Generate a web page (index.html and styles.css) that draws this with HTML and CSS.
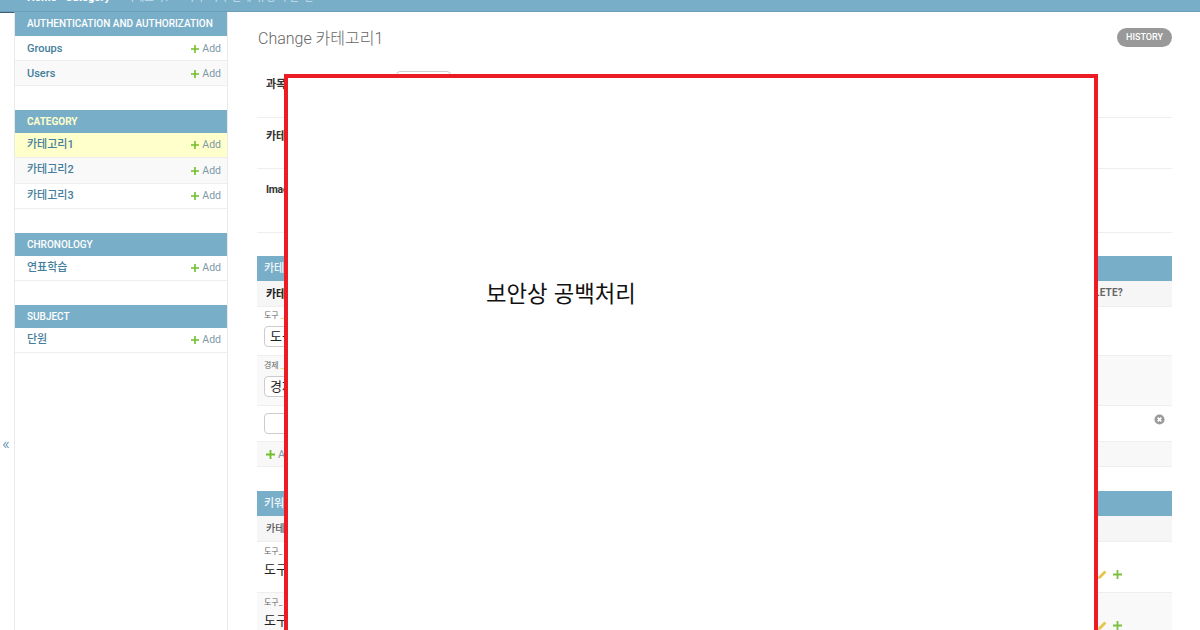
FILE: index.html
```html
<!DOCTYPE html>
<html lang="ko">
<head>
<meta charset="utf-8">
<title>Change 카테고리1</title>
<link rel="stylesheet" href="styles.css">
</head>
<body>
<div class="breadcrumbs"><div class="crumbs"><b>Home</b> › <b>Category</b> <span class="sep">›</span> <span class="ko">카테고리1</span> <span class="sep">›</span> <span class="ko">기타 기타 문제 유형 구분 선</span></div></div>
<div class="shell">
  <div class="toggle"><span>«</span></div>
  <nav class="sidebar">
    <section class="module first">
      <h2 class="caption">AUTHENTICATION AND AUTHORIZATION</h2>
      <div class="mrow"><a class="mname">Groups</a><span class="madd"><svg class="plus" viewBox="0 0 10 10"><path d="M4 0h2v4h4v2H6v4H4V6H0V4h4z"/></svg>Add</span></div>
      <div class="mrow alt"><a class="mname">Users</a><span class="madd"><svg class="plus" viewBox="0 0 10 10"><path d="M4 0h2v4h4v2H6v4H4V6H0V4h4z"/></svg>Add</span></div>
    </section>
    <section class="module">
      <h2 class="caption current">CATEGORY</h2>
      <div class="mrow selected"><a class="mname kor">카테고리1</a><span class="madd"><svg class="plus" viewBox="0 0 10 10"><path d="M4 0h2v4h4v2H6v4H4V6H0V4h4z"/></svg>Add</span></div>
      <div class="mrow alt tall"><a class="mname kor">카테고리2</a><span class="madd"><svg class="plus" viewBox="0 0 10 10"><path d="M4 0h2v4h4v2H6v4H4V6H0V4h4z"/></svg>Add</span></div>
      <div class="mrow"><a class="mname kor">카테고리3</a><span class="madd"><svg class="plus" viewBox="0 0 10 10"><path d="M4 0h2v4h4v2H6v4H4V6H0V4h4z"/></svg>Add</span></div>
    </section>
    <section class="module">
      <h2 class="caption">CHRONOLOGY</h2>
      <div class="mrow"><a class="mname kor">연표학습</a><span class="madd"><svg class="plus" viewBox="0 0 10 10"><path d="M4 0h2v4h4v2H6v4H4V6H0V4h4z"/></svg>Add</span></div>
    </section>
    <section class="module">
      <h2 class="caption">SUBJECT</h2>
      <div class="mrow"><a class="mname kor">단원</a><span class="madd"><svg class="plus" viewBox="0 0 10 10"><path d="M4 0h2v4h4v2H6v4H4V6H0V4h4z"/></svg>Add</span></div>
    </section>
  </nav>
  <main class="content">
    <div class="titlebar">
      <h1 class="title">Change 카테고리1</h1>
      <a class="history">HISTORY</a>
    </div>
    <div class="frow f1"><label class="flabel">과목</label><span class="fselect"></span></div>
    <div class="frow f2"><label class="flabel">카테</label></div>
    <div class="frow f3"><label class="flabel latin">Image</label></div>

    <section class="inline one">
      <h2 class="ihead">카테고리</h2>
      <div class="ith"><span>카테고리</span><span class="del">DELETE?</span></div>
      <div class="irow r1"><small class="ilabel">도구 <i class="req">_</i></small><span class="iselect">도구</span></div>
      <div class="irow r2"><small class="ilabel">경제 <i class="req">_</i></small><span class="iselect">경제</span></div>
      <div class="irow r3"><span class="iselect"></span><svg class="remove" viewBox="0 0 12 12"><circle cx="6" cy="6" r="5.5"/><path d="M4 4l4 4M8 4l-4 4"/></svg></div>
      <div class="iadd"><svg class="plus" viewBox="0 0 10 10"><path d="M4 0h2v4h4v2H6v4H4V6H0V4h4z"/></svg>Add</div>
    </section>

    <section class="inline two">
      <h2 class="ihead">키워드</h2>
      <div class="ith plain"><span>카테고리</span></div>
      <div class="krow"><small class="ilabel">도구_</small><div class="kline"><span class="kval">도구</span><span class="kicons"><svg class="pencil" viewBox="0 0 12 12"><path d="M0 12l1-3.6L8.6.8l2.6 2.6L3.6 11z"/></svg><svg class="plus kplus" viewBox="0 0 10 10"><path d="M4 0h2v4h4v2H6v4H4V6H0V4h4z"/></svg></span></div></div>
      <div class="krow alt"><small class="ilabel">도구_</small><div class="kline"><span class="kval">도구</span><span class="kicons"><svg class="pencil" viewBox="0 0 12 12"><path d="M0 12l1-3.6L8.6.8l2.6 2.6L3.6 11z"/></svg><svg class="plus kplus" viewBox="0 0 10 10"><path d="M4 0h2v4h4v2H6v4H4V6H0V4h4z"/></svg></span></div></div>
    </section>
  </main>
</div>
<div class="redact"><p class="redact-text">보안상 공백처리</p></div>
</body>
</html>
```
FILE: styles.css
```css
* { box-sizing: border-box; }
html, body { margin: 0; height: 630px; overflow: hidden; background: #fff; }
body { font-family: Roboto, "Noto Sans CJK KR", sans-serif; font-size: 12px; color: #333; position: relative; }
h1, h2, p { margin: 0; font-weight: 400; }

.breadcrumbs { height: 12px; background: #79aec8; border-bottom: 1px solid #6c9ebb; overflow: hidden; padding-left: 27px; color: #c9e0ec; }
.crumbs { font-size: 11px; line-height: 16px; margin-top: -10px; white-space: nowrap; }
.crumbs b { color: #fff; font-weight: 700; }
.crumbs .ko { font-size: 10.5px; word-spacing: 2px; }
.crumbs .sep { margin: 0 3px; }

.shell { display: flex; height: 618px; }
.toggle { width: 15px; flex: none; border-right: 1px solid #eaeaea; border-top: 1px solid #3b5f78; display: flex; align-items: flex-start; padding: 420px 0 0 2px; color: #447e9b; font-size: 17px; font-weight: 300; line-height: 20px; }
.sidebar { width: 213px; flex: none; border-right: 1px solid #eaeaea; }
.module { margin-bottom: 24px; }
.caption { height: 23px; background: #79aec8; color: #fff; font-size: 10px; font-weight: 500; line-height: 23px; padding-left: 12px; white-space: nowrap; }
.caption.current { color: #ffffcc; font-weight: 700; }
.first .caption { height: 24px; line-height: 23px; }
.first .mrow { padding-top: 1px; }
.mrow { height: 25px; display: flex; justify-content: space-between; align-items: center; padding: 0 6px 0 12px; border-bottom: 1px solid #eee; }
.mrow.alt { background: #f9f9f9; }
.mrow.tall { height: 26px; }
.mrow.selected { background: #ffffcc; }
.mname { color: #447e9b; font-size: 11px; font-weight: 500; line-height: 14px; }
.mname.kor { margin-bottom: 1px; }
.madd { display: flex; align-items: center; color: #7d99a8; font-size: 10.5px; line-height: 14px; }
.plus { width: 8px; height: 8px; fill: #70bf2b; margin-right: 3px; flex: none; }

.content { flex: 1; padding: 0 28px 0 29px; min-width: 0; }
.titlebar { height: 54px; display: flex; justify-content: space-between; align-items: flex-start; padding-top: 17px; }
.title { font-size: 16px; line-height: 20px; font-weight: 300; color: #666; padding-left: 1px; }
.history { background: #999; color: #fff; font-size: 9px; font-weight: 500; height: 19px; line-height: 19px; width: 55px; margin-top: -1px; text-align: center; border-radius: 10px; }

.frow { display: flex; align-items: flex-start; padding-left: 9px; border-bottom: 1px solid #eee; }
.f1 { height: 52px; padding-top: 12px; }
.f2 { height: 51px; padding-top: 12px; }
.f3 { height: 64px; padding-top: 14px; }
.flabel { width: 130px; color: #333; font-size: 11px; font-weight: 700; line-height: 14px; }
.flabel.latin { font-size: 10.5px; letter-spacing: -.3px; }
.fselect { width: 55px; height: 20px; border: 1px solid #ccc; border-radius: 4px; margin-top: -7px; }

.inline { margin-top: 23px; }
.inline.two { margin-top: 24px; }
.ihead { height: 25px; background: #79aec8; color: #f0f7fb; font-size: 11px; font-weight: 500; line-height: 25px; padding-left: 7px; }
.ith { height: 26px; background: #f6f6f6; border-bottom: 1px solid #eee; padding: 0 49px 2px 9px; display: flex; justify-content: space-between; align-items: center; color: #222; font-size: 11px; font-weight: 700; }
.ith.plain { color: #555; font-size: 10px; font-weight: 500; }
.del { color: #666; font-size: 10px; letter-spacing: .2px; }
.irow { padding: 0 7px; border-bottom: 1px solid #eee; }
.r1 { height: 49px; padding-top: 3px; }
.r2 { height: 50px; padding-top: 4px; background: #f9f9f9; }
.r3 { height: 36px; padding-top: 7px; display: flex; justify-content: space-between; align-items: flex-start; }
.ilabel { display: block; color: #666; font-size: 8px; line-height: 12px; margin-bottom: 4px; }
.req { color: #efb80b; font-style: normal; }
.iselect { display: block; width: 120px; height: 21px; border: 1px solid #ccc; border-radius: 4px; background: #fff; color: #222; font-size: 13px; line-height: 19px; padding-left: 5px; }
.remove { width: 11px; height: 11px; fill: #999; margin-top: 1px; }
.remove path { stroke: #fff; stroke-width: 1.8; fill: none; }
.iadd { height: 25px; display: flex; align-items: center; padding-left: 9px; background: #f8f8f8; border-bottom: 1px solid #eee; color: #7d99a8; font-size: 11px; }
.iadd .plus { width: 9px; height: 9px; margin-right: 3px; }

.krow { height: 51px; padding: 4px 7px 0; border-bottom: 1px solid #eee; }
.krow.alt { background: #f9f9f9; }
.kline { display: flex; justify-content: space-between; align-items: flex-start; }
.kval { color: #222; font-size: 13px; line-height: 16px; }
.kicons { display: flex; align-items: center; padding: 8px 43px 0 0; }
.pencil { width: 9px; height: 9px; fill: #e8c24a; }
.kplus { width: 9px; height: 9px; margin: 0 0 0 6px; fill: #7cc040; }

.redact { position: absolute; left: 284px; top: 74px; width: 814px; height: 570px; background: #fff; border: 4px solid #ed1c24; }
.redact-text { position: absolute; left: 198px; top: 199px; color: #111; font-size: 22.3px; line-height: 30px; font-family: "Noto Sans CJK KR", sans-serif; white-space: nowrap; }
```
